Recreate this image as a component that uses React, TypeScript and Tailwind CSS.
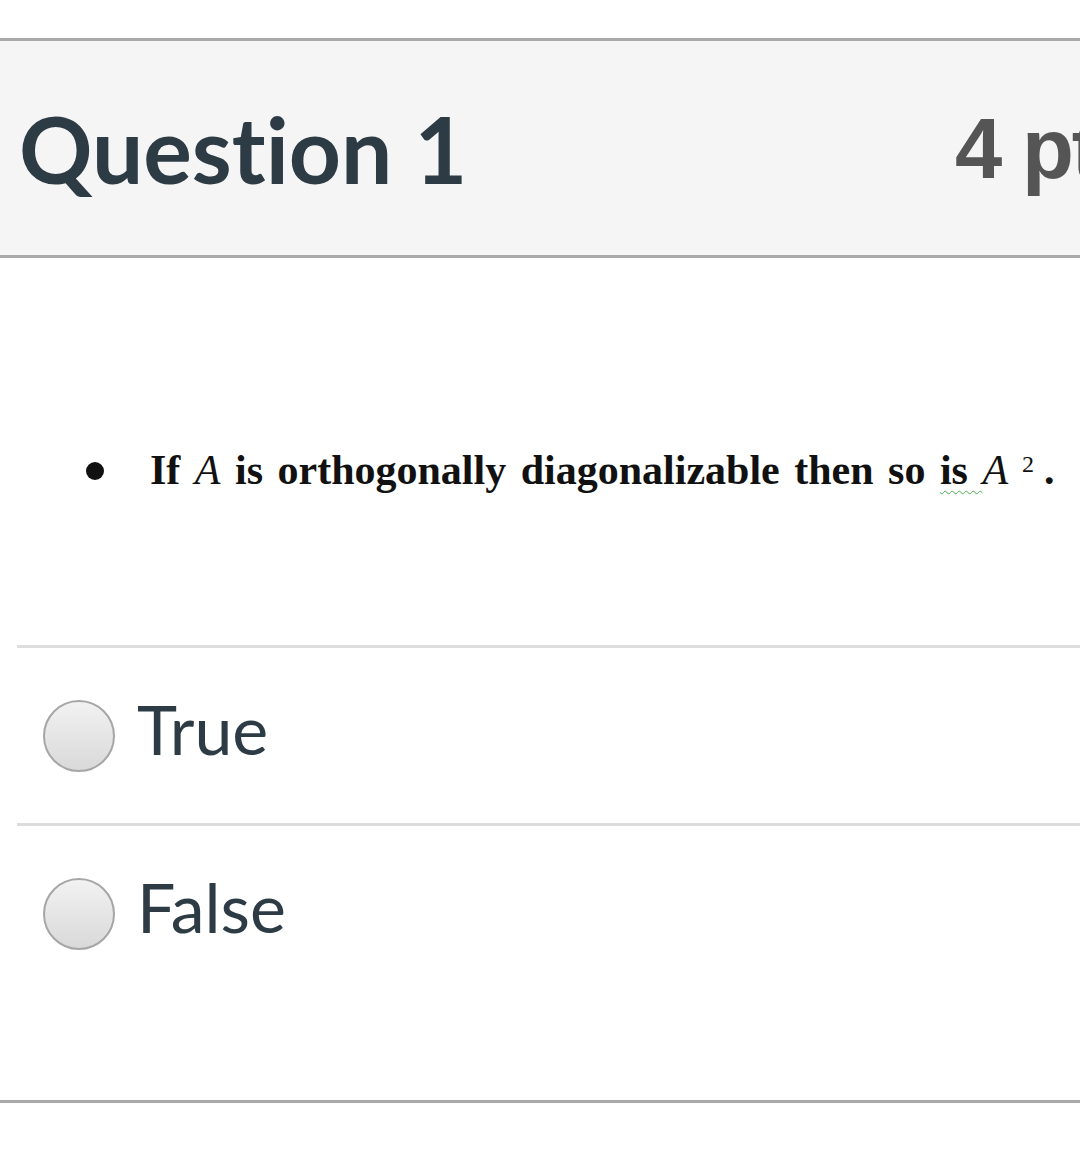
export default function App() {
  return (
    <main className="min-h-screen bg-white pt-[38px]">
      {/* Question header */}
      <header className="flex h-[220px] items-center overflow-hidden border-y-[3px] border-[#a9a9a9] bg-[#f5f5f5]">
        <h2 className="flex-1 pl-[19px] font-['Lato'] text-[91px] font-bold leading-none text-[#2d3b45] [font-variant-ligatures:none]">
          Question 1
        </h2>
        <div className="w-[125px] shrink-0 whitespace-nowrap font-['Liberation_Sans'] text-[85px] font-bold leading-none tracking-[-2px] text-[#555555]">
          4 pts
        </div>
      </header>

      {/* Question body */}
      <section className="flex h-[387px] items-center pt-[38px]">
        <div className="flex items-center pl-[86px] font-['Liberation_Serif'] text-[42px] font-bold text-[#111111]">
          <span className="mr-[46px] h-[18px] w-[18px] rounded-full bg-[#111111]" />
          <p className="whitespace-nowrap [word-spacing:4px]">
            If <i className="font-normal">A</i> is orthogonally diagonalizable then so{' '}
            <span className="underline decoration-wavy decoration-[#4caf50] decoration-1 underline-offset-[6px]">is </span>
            <i className="font-normal">A</i>
            <sup className="ml-[14px] text-[24px] font-normal">2</sup>
            <span className="ml-[10px]">.</span>
          </p>
        </div>
      </section>

      {/* Answers */}
      <div className="ml-[17px]">
        {['True', 'False'].map((label) => (
          <label key={label} className="flex h-[178px] items-center border-t-[3px] border-[#dddddd]">
            <span className="ml-[26px] h-[72px] w-[72px] rounded-full border-2 border-[#a6a6a6] bg-gradient-to-b from-[#f2f2f2] to-[#d9d9d9]" />
            <span className="mb-[14px] ml-[22px] font-['Lato'] text-[68px] leading-none text-[#2d3b45]">{label}</span>
          </label>
        ))}
      </div>
      <div className="h-[99px]" />
      <div className="border-t-[3px] border-[#a9a9a9]" />
    </main>
  );
}
